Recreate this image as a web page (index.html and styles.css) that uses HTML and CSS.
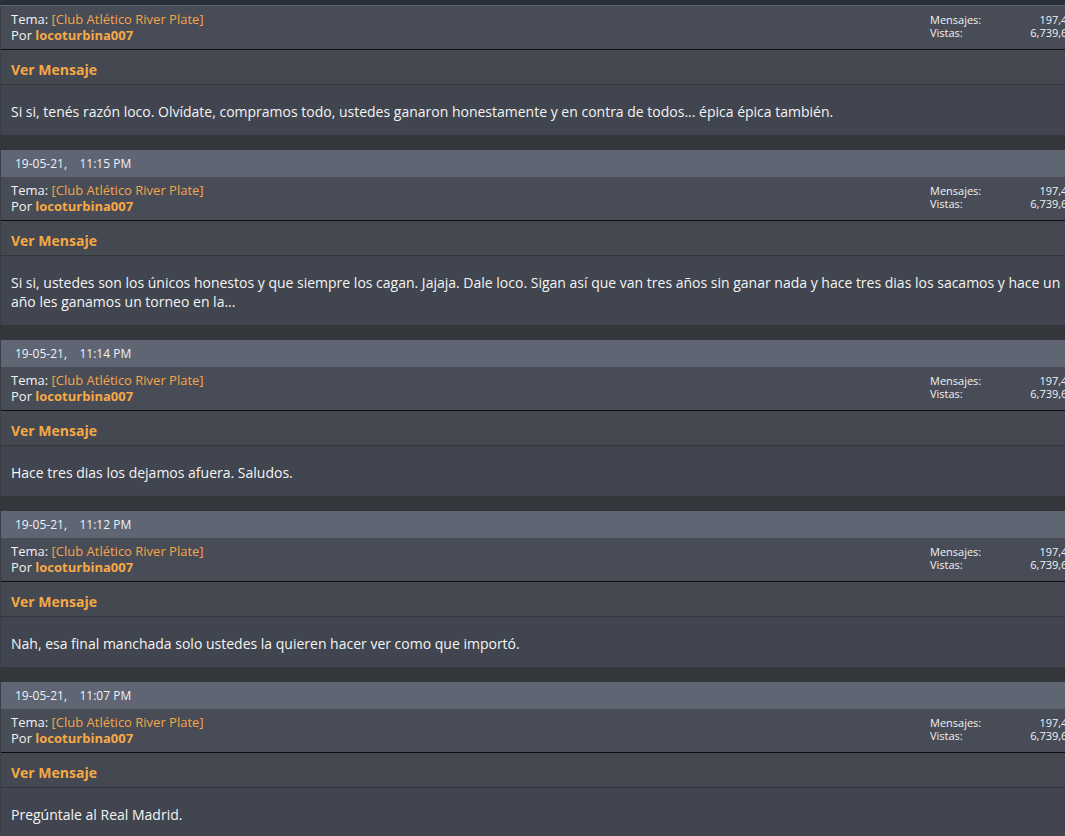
FILE: index.html
```html
<!DOCTYPE html>
<html lang="es">
<head>
<meta charset="utf-8">
<title>Mensajes</title>
<link rel="stylesheet" href="styles.css">
</head>
<body>
<div class="page">
  <div class="topstrip"></div>

  <div class="post">
    <div class="post-info">
      <div class="meta">
        <div>Tema: <a class="thread" href="#">[Club Atlético River Plate]</a></div>
        <div>Por <a class="user" href="#">locoturbina007</a></div>
      </div>
      <table class="stats">
        <tr><td class="lbl">Mensajes:</td><td class="val">197,476</td></tr>
        <tr><td class="lbl">Vistas:</td><td class="val">6,739,618</td></tr>
      </table>
    </div>
    <div class="post-title"><a href="#">Ver Mensaje</a></div>
    <div class="post-body">Si si, tenés razón loco. Olvídate, compramos todo, ustedes ganaron honestamente y en contra de todos... épica épica también.</div>
  </div>

  <div class="post">
    <div class="post-date">19-05-21,&nbsp;&nbsp;&nbsp; 11:15 PM</div>
    <div class="post-info">
      <div class="meta">
        <div>Tema: <a class="thread" href="#">[Club Atlético River Plate]</a></div>
        <div>Por <a class="user" href="#">locoturbina007</a></div>
      </div>
      <table class="stats">
        <tr><td class="lbl">Mensajes:</td><td class="val">197,476</td></tr>
        <tr><td class="lbl">Vistas:</td><td class="val">6,739,618</td></tr>
      </table>
    </div>
    <div class="post-title"><a href="#">Ver Mensaje</a></div>
    <div class="post-body">Si si, ustedes son los únicos honestos y que siempre los cagan. Jajaja. Dale loco. Sigan así que van tres años sin ganar nada y hace tres dias los sacamos y hace un año les ganamos un torneo en la...</div>
  </div>

  <div class="post">
    <div class="post-date">19-05-21,&nbsp;&nbsp;&nbsp; 11:14 PM</div>
    <div class="post-info">
      <div class="meta">
        <div>Tema: <a class="thread" href="#">[Club Atlético River Plate]</a></div>
        <div>Por <a class="user" href="#">locoturbina007</a></div>
      </div>
      <table class="stats">
        <tr><td class="lbl">Mensajes:</td><td class="val">197,476</td></tr>
        <tr><td class="lbl">Vistas:</td><td class="val">6,739,618</td></tr>
      </table>
    </div>
    <div class="post-title"><a href="#">Ver Mensaje</a></div>
    <div class="post-body">Hace tres dias los dejamos afuera. Saludos.</div>
  </div>

  <div class="post">
    <div class="post-date">19-05-21,&nbsp;&nbsp;&nbsp; 11:12 PM</div>
    <div class="post-info">
      <div class="meta">
        <div>Tema: <a class="thread" href="#">[Club Atlético River Plate]</a></div>
        <div>Por <a class="user" href="#">locoturbina007</a></div>
      </div>
      <table class="stats">
        <tr><td class="lbl">Mensajes:</td><td class="val">197,476</td></tr>
        <tr><td class="lbl">Vistas:</td><td class="val">6,739,618</td></tr>
      </table>
    </div>
    <div class="post-title"><a href="#">Ver Mensaje</a></div>
    <div class="post-body">Nah, esa final manchada solo ustedes la quieren hacer ver como que importó.</div>
  </div>

  <div class="post">
    <div class="post-date">19-05-21,&nbsp;&nbsp;&nbsp; 11:07 PM</div>
    <div class="post-info">
      <div class="meta">
        <div>Tema: <a class="thread" href="#">[Club Atlético River Plate]</a></div>
        <div>Por <a class="user" href="#">locoturbina007</a></div>
      </div>
      <table class="stats">
        <tr><td class="lbl">Mensajes:</td><td class="val">197,476</td></tr>
        <tr><td class="lbl">Vistas:</td><td class="val">6,739,618</td></tr>
      </table>
    </div>
    <div class="post-title"><a href="#">Ver Mensaje</a></div>
    <div class="post-body">Pregúntale al Real Madrid.</div>
  </div>
</div>
</body>
</html>
```

FILE: styles.css
```css
html, body {
  margin: 0;
  padding: 0;
  background: #33363b;
  overflow: hidden;
}
body {
  font-family: "Open Sans", "Noto Sans", sans-serif;
  color: #f2f2f2;
}
.page {
  width: 1100px;
}
.topstrip {
  height: 5px;
  background: #29303a;
  border-bottom: 1px solid #5e6472;
}
.post {
  margin-bottom: 15px;
  border-left: 1px solid #3a3e46;
}
.post-date {
  height: 27px;
  line-height: 27px;
  background: #5f6573;
  padding-left: 14px;
  font-size: 12px;
  color: #eef2f7;
}
.post-info {
  height: 43px;
  box-sizing: content-box;
  background: #474c56;
  border-bottom: 1px solid #0e0f11;
  display: flex;
  justify-content: space-between;
  align-items: flex-start;
  padding: 0 10px;
}
.meta {
  font-size: 13px;
  line-height: 16px;
  padding-top: 5px;
  color: #f2f2f2;
}
.thread {
  color: #f5a54a;
  text-decoration: none;
}
.user {
  color: #f7a845;
  font-weight: bold;
  text-decoration: none;
}
.stats {
  border-collapse: collapse;
  font-size: 11px;
  line-height: 13px;
  color: #f2f2f2;
  margin-top: 7px;
  margin-right: 10px;
}
.stats td {
  padding: 0;
}
.stats .lbl {
  width: 100px;
}
.stats .val {
  text-align: right;
  width: 50px;
}
.post-title {
  height: 35px;
  box-sizing: border-box;
  background: #434851;
  border-bottom: 1px solid #33363c;
  padding: 9px 10px 0 10px;
  line-height: 20px;
}
.post-title a {
  color: #f7a845;
  font-weight: bold;
  font-size: 14px;
  text-decoration: none;
}
.post-body {
  background: #41454f;
  padding: 17px 10px 14px 10px;
  font-size: 14px;
  line-height: 19px;
  color: #f4f4f4;
  width: 1060px;
}
```
